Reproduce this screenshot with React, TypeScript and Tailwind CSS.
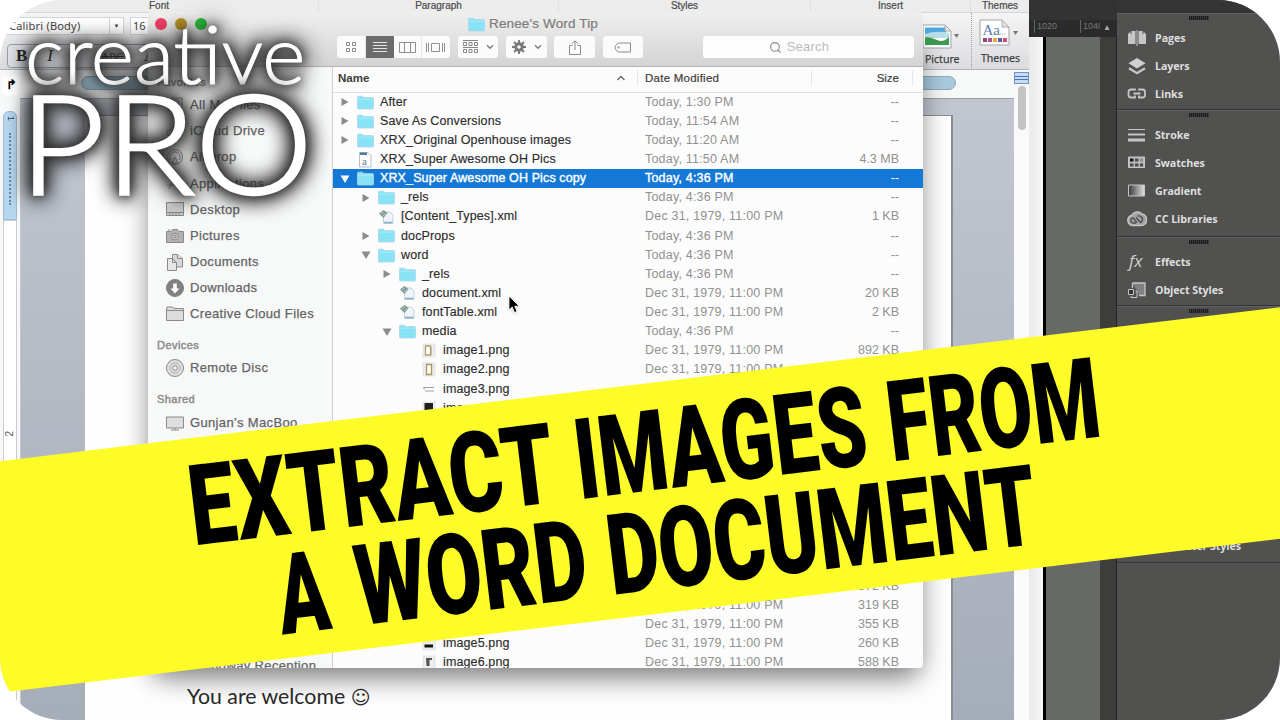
import React, { useLayoutEffect, useRef, useState } from 'react';
import { Search } from 'lucide-react';

type IconName = 'folder' | 'doc' | 'xml' | 'img1' | 'img2' | 'img3' | 'img4' | 'img5' | 'img6' | 'none';

interface FileRow {
  name: string;
  icon: IconName;
  depth: number;
  arrow?: 'right' | 'down';
  date: string;
  size: string;
  selected?: boolean;
}

const OLD = 'Dec 31, 1979, 11:00 PM';
const NOW = 'Today, 4:36 PM';

const TOP_ROWS: FileRow[] = [
  { name: 'After', icon: 'folder', depth: 0, arrow: 'right', date: 'Today, 1:30 PM', size: '--' },
  { name: 'Save As Conversions', icon: 'folder', depth: 0, arrow: 'right', date: 'Today, 11:54 AM', size: '--' },
  { name: 'XRX_Original Openhouse images', icon: 'folder', depth: 0, arrow: 'right', date: 'Today, 11:20 AM', size: '--' },
  { name: 'XRX_Super Awesome OH Pics', icon: 'doc', depth: 0, date: 'Today, 11:50 AM', size: '4.3 MB' },
  { name: 'XRX_Super Awesome OH Pics copy', icon: 'folder', depth: 0, arrow: 'down', date: NOW, size: '--', selected: true },
  { name: '_rels', icon: 'folder', depth: 1, arrow: 'right', date: NOW, size: '--' },
  { name: '[Content_Types].xml', icon: 'xml', depth: 1, date: OLD, size: '1 KB' },
  { name: 'docProps', icon: 'folder', depth: 1, arrow: 'right', date: NOW, size: '--' },
  { name: 'word', icon: 'folder', depth: 1, arrow: 'down', date: NOW, size: '--' },
  { name: '_rels', icon: 'folder', depth: 2, arrow: 'right', date: NOW, size: '--' },
  { name: 'document.xml', icon: 'xml', depth: 2, date: OLD, size: '20 KB' },
  { name: 'fontTable.xml', icon: 'xml', depth: 2, date: OLD, size: '2 KB' },
  { name: 'media', icon: 'folder', depth: 2, arrow: 'down', date: NOW, size: '--' },
  { name: 'image1.png', icon: 'img1', depth: 3, date: OLD, size: '892 KB' },
  { name: 'image2.png', icon: 'img2', depth: 3, date: OLD, size: '' },
  { name: 'image3.png', icon: 'img3', depth: 3, date: '', size: '' },
  { name: 'image4.png', icon: 'img4', depth: 3, date: '', size: '' },
];

const BOTTOM_ROWS: FileRow[] = [
  { name: '', icon: 'none', depth: 3, date: '', size: '372 KB' },
  { name: '', icon: 'none', depth: 3, date: OLD, size: '319 KB' },
  { name: '', icon: 'none', depth: 3, date: OLD, size: '355 KB' },
  { name: 'image5.png', icon: 'img5', depth: 3, date: OLD, size: '260 KB' },
  { name: 'image6.png', icon: 'img6', depth: 3, date: OLD, size: '588 KB' },
];

const INDENT = ['pl-0', 'pl-[21px]', 'pl-[42px]', 'pl-[63px]'];

// Scales a word horizontally so that its ink is exactly `width` px wide
const FitWord: React.FC<{ text: string; width: number }> = ({ text, width }) => {
  const ref = useRef<HTMLSpanElement>(null);
  const [fit, setFit] = useState({ scale: 1, shift: 0 });

  useLayoutEffect(() => {
    const ctx = document.createElement('canvas').getContext('2d');
    if (!ref.current || !ctx) return;
    const cs = getComputedStyle(ref.current);
    ctx.font = `${cs.fontWeight} ${cs.fontSize} ${cs.fontFamily}`;
    const m = ctx.measureText(text);
    const scale = width / (m.actualBoundingBoxLeft + m.actualBoundingBoxRight);
    setFit({ scale, shift: m.actualBoundingBoxLeft * scale });
  }, [text, width]);

  return (
    <span className="block shrink-0" style={{ width }}>
      <span
        ref={ref}
        className="inline-block origin-left whitespace-nowrap"
        style={{ transform: `translateX(${fit.shift}px) scaleX(${fit.scale})` }}
      >
        {text}
      </span>
    </span>
  );
};

const Folder = () => (
  <svg width="17" height="15" viewBox="0 0 17 15" className="shrink-0">
    <path d="M.5 2.200q0-1 1-1h4l1.300 1.400h8.700q1 0 1 1v9.400q0 1-1 1h-14q-1 0-1-1z" fill="#88e3f6" stroke="#b0d3e4" strokeWidth=".8" />
    <path d="M1 4.200h15" stroke="#a9edf9" />
  </svg>
);

const FileIcon: React.FC<{ icon: IconName }> = ({ icon }) => {
  switch (icon) {
    case 'folder':
      return <Folder />;
    case 'doc':
      return (
        <svg width="17" height="17" viewBox="0 0 17 17" className="shrink-0">
          <path d="M2.500 1.500h8.500l3 3v11.500h-11.500z" fill="#fafcfd" stroke="#b7c1c8" />
          <path d="M3 1.500h7v2.600h-7z" fill="#4f7d99" />
          <text x="5" y="13.500" fontSize="11" fontFamily="Liberation Serif, serif" fill="#5f86a0">a</text>
        </svg>
      );
    case 'xml':
      return (
        <svg width="17" height="16" viewBox="0 0 17 16" className="shrink-0">
          <path d="M5.500 3h6.500l3 3v8.500h-9.500z" fill="#eef4f9" stroke="#c3d0db" />
          <path d="M6 13.500h8.500" stroke="#8fb0c9" strokeWidth="1.600" />
          <path d="M1 4.500l4.500-3.500l4 3l-4 5z" fill="#7b9c91" />
          <path d="M3 4.500l3-1.500M5 7l3-2.500" stroke="#b4cfc5" />
        </svg>
      );
    case 'none':
      return <span className="w-[17px]" />;
    default:
      return (
        <svg width="17" height="15" viewBox="0 0 17 15" className="shrink-0">
          {icon !== 'img3' && <rect x="3" y="1" width="12" height="13" fill="#eeeeec" stroke="#d6d6d4" strokeWidth=".6" />}
          {icon === 'img1' && <path d="M5.500 3h5v9h-5z M11 4v8" fill="#fff" stroke="#b49f74" strokeWidth="1.300" />}
          {icon === 'img2' && <path d="M6.500 2.500h5v10h-5z" fill="#fff" stroke="#ad9660" strokeWidth="1.400" />}
          {icon === 'img3' && <path d="M4 8.500v-2h10M5 10h9" fill="none" stroke="#9da2a6" strokeWidth="1.200" />}
          {icon === 'img4' && <path d="M4.500 2h8.500v11h-8.500z" fill="#1f1f20" />}
          {icon === 'img4' && <path d="M6 9.500h6" stroke="#999" />}
          {icon === 'img5' && <path d="M4.500 8.500h8.500v3h-8.500z" fill="#111" />}
          {icon === 'img6' && <path d="M6 3h6v2h-2.500v6h-3z" fill="#555" />}
        </svg>
      );
  }
};

const ListRow: React.FC<{ row: FileRow }> = ({ row }) => (
  <div className={`flex h-[19.130px] shrink-0 items-center text-[12.500px] ${row.selected ? 'bg-[#1478d6] text-white' : 'text-[#2c2c2c]'}`}>
    <div className={`flex w-[312px] shrink-0 items-center ${INDENT[row.depth]}`}>
      <svg width="24" height="12" viewBox="0 0 24 12" className="shrink-0" fill={row.selected ? '#fff' : '#8b8b8b'}>
        {row.arrow === 'right' && <path d="M8.500 2v8l7-4z" />}
        {row.arrow === 'down' && <path d="M7.500 2.500h9l-4.500 7.500z" />}
      </svg>
      <FileIcon icon={row.icon} />
      <span className={`whitespace-nowrap pl-[6px] tracking-[0.120px] ${row.selected ? '[-webkit-text-stroke:0.400px_white]' : '[-webkit-text-stroke:0.150px_#2c2c2c]'}`}>
        {row.name}
      </span>
    </div>
    <div className={`w-[170px] whitespace-nowrap tracking-[0.200px] ${row.selected ? '[-webkit-text-stroke:0.400px_white]' : 'text-[#919191]'}`}>{row.date}</div>
    <div className={`w-[84px] whitespace-nowrap text-right ${row.selected ? '' : 'text-[#919191]'}`}>{row.size}</div>
  </div>
);

const SidebarItem: React.FC<{ label: string; children: React.ReactNode }> = ({ label, children }) => (
  <div className="flex h-[26.100px] shrink-0 items-center gap-[6px] pl-[18px]">
    <svg width="18" height="18" viewBox="0 0 18 18" className="shrink-0" fill="none" stroke="#8a8a8a" strokeWidth="1">
      {children}
    </svg>
    <span className="whitespace-nowrap text-[13px] tracking-[0.350px] text-[#646464] [-webkit-text-stroke:0.250px_#646464]">{label}</span>
  </div>
);

const SidebarLabel: React.FC<{ label: string }> = ({ label }) => (
  <div className="shrink-0 pl-[9px] text-[11px] leading-[14px] tracking-[0.450px] text-[#8b8b8b] [-webkit-text-stroke:0.450px_#8b8b8b]">{label}</div>
);

const Chevron = () => (
  <svg width="8" height="6" viewBox="0 0 8 6" fill="none" stroke="#7c7c7c" strokeWidth="1.400">
    <path d="M1 1.200l3 3l3-3" />
  </svg>
);

const FinderToolbar = () => (
  <div className="flex h-[22px] items-center">
    <div className="ml-[189px] flex h-[22px] w-[113px] overflow-hidden rounded-[3px] bg-[#fbfbfb]">
      <div className="flex w-[29px] items-center justify-center border-r border-gray-200">
        <svg width="12" height="12" viewBox="0 0 12 12" fill="none" stroke="#8b8b8b">
          <path d="M1.500 1.500h3v3h-3zM7.500 1.500h3v3h-3zM1.500 7.500h3v3h-3zM7.500 7.500h3v3h-3z" />
        </svg>
      </div>
      <div className="flex w-[28px] items-center justify-center bg-[#6c6c6c]">
        <svg width="14" height="12" viewBox="0 0 14 12" stroke="#e4e4e4">
          <path d="M0 1.500h14M0 4.500h14M0 7.500h14M0 10.500h14" />
        </svg>
      </div>
      <div className="flex w-[28px] items-center justify-center border-r border-gray-200">
        <svg width="17" height="11" viewBox="0 0 17 11" fill="none" stroke="#909090">
          <path d="M.5.5h16v10h-16zM5.500.5v10M11.500.5v10" />
        </svg>
      </div>
      <div className="flex w-[28px] items-center justify-center">
        <svg width="20" height="11" viewBox="0 0 20 11" fill="none" stroke="#909090">
          <path d="M5.500 1.500h8v8h-8zM.5 1v9M2.500 1v9M16.500 1v9M18.500 1v9" />
        </svg>
      </div>
    </div>
    <div className="ml-2 flex h-[22px] w-10 items-center justify-center gap-2 rounded-[3px] bg-[#fbfbfb]">
      <svg width="15" height="14" viewBox="0 0 15 14" fill="none" stroke="#868686">
        <path d="M0 .5h15M0 7.500h15M.5 2.500h3v3h-3zM6 2.500h3v3h-3zM11.500 2.500h3v3h-3zM.5 9.500h3v3h-3zM6 9.500h3v3h-3zM11.500 9.500h3v3h-3z" />
      </svg>
      <Chevron />
    </div>
    <div className="ml-2 flex h-[22px] w-[41px] items-center justify-center gap-2 rounded-[3px] bg-[#fbfbfb]">
      <svg width="14" height="14" viewBox="0 0 14 14" fill="none" stroke="#777">
        <circle cx="7" cy="7" r="3.300" strokeWidth="3" />
        <path d="M7 0v3M7 11v3M0 7h3M11 7h3M2 2l2.200 2.200M9.800 9.800l2.200 2.200M2 12l2.200-2.200M9.800 4.200l2.200-2.200" strokeWidth="1.900" />
      </svg>
      <Chevron />
    </div>
    <div className="ml-[7px] flex h-[22px] w-[41px] items-center justify-center rounded-[3px] bg-[#fbfbfb]">
      <svg width="12" height="15" viewBox="0 0 12 15" fill="none" stroke="#8b8b8b">
        <path d="M3.500 5.500h-3v9h11v-9h-3M6 10v-9M3 3.800l3-3l3 3" />
      </svg>
    </div>
    <div className="ml-2 flex h-[22px] w-10 items-center justify-center rounded-[3px] bg-[#fbfbfb]">
      <svg width="18" height="11" viewBox="0 0 18 11" fill="none" stroke="#8b8b8b">
        <path d="M5 1h11.500v9h-11.500q-1.500 0-3.500-2.800q-1-1.700 0-3.400q2-2.800 3.500-2.800z" />
        <circle cx="4.500" cy="5.500" r=".7" />
      </svg>
    </div>
    <div className="ml-[60px] flex h-[22px] w-[211px] items-center justify-center gap-[5px] rounded-[3px] bg-[#fdfdfd] pr-[19px] text-[13px] tracking-[0.250px] text-[#bcbcbc]">
      <Search size={13} color="#858585" strokeWidth={2} />
      Search
    </div>
  </div>
);

const FinderSidebar = () => (
  <div className="flex w-[185px] shrink-0 flex-col overflow-hidden border-r border-[#cfcfcf] bg-[#f7f8f8] pt-2">
    <SidebarLabel label="Favorites" />
    <div className="h-[3px] shrink-0" />
    <SidebarItem label="All My Files">
      <path d="M2 4h11v10h-11zM5 2h11v10" />
    </SidebarItem>
    <SidebarItem label="iCloud Drive">
      <path d="M4 14q-3 0-3-3t3-3q1-4 5-4q3 0 4 3q4 0 4 3.500t-3 3.500z" />
    </SidebarItem>
    <SidebarItem label="AirDrop">
      <circle cx="9" cy="9" r="7.500" />
      <path d="M5 12a5 5 0 1 1 8 0M9 9l3 6h-6z" />
    </SidebarItem>
    <SidebarItem label="Applications">
      <path d="M3 15l6-12l6 12M1 11h16" />
    </SidebarItem>
    <SidebarItem label="Desktop">
      <path d="M.5 2.500h17v13h-17z" fill="#d0d0d0" />
      <path d="M.5 12.500h17M4 13v2M7 13v2M10 13v2M13 13v2" />
    </SidebarItem>
    <SidebarItem label="Pictures">
      <path d="M.5 4.500h4.500l1.500-2h5l1.500 2h4.500v11h-17zM2 3h2" fill="#b2b2b2" />
      <circle cx="9" cy="9.500" r="3.500" fill="#c8c8c8" />
      <circle cx="9" cy="9.500" r="1.300" />
    </SidebarItem>
    <SidebarItem label="Documents">
      <path d="M6.500 1.500h5l5 4v8.500h-10z" fill="#d8d8d8" />
      <path d="M1.500 5.500h5l4 4v8h-9zM6.500 5.500v4h4M11.500 1.500v4h5" fill="#e6e6e6" />
    </SidebarItem>
    <SidebarItem label="Downloads">
      <circle cx="9" cy="9" r="8.500" fill="#808080" stroke="#808080" />
      <path d="M9 14.500l-4.500-5h2.700v-5h3.600v5h2.700z" fill="#fff" stroke="none" />
    </SidebarItem>
    <SidebarItem label="Creative Cloud Files">
      <path d="M1 3.500v-1.500h6l1 1.500h9.500v12h-17v-12zM.5 5.500h17" fill="#dcdcdc" />
    </SidebarItem>
    <div className="h-[11px] shrink-0" />
    <SidebarLabel label="Devices" />
    <div className="h-[3px] shrink-0" />
    <SidebarItem label="Remote Disc">
      <circle cx="9" cy="9" r="8.500" fill="#ddd" />
      <circle cx="9" cy="9" r="5" stroke="#b0b0b0" />
      <circle cx="9" cy="9" r="2.300" fill="#f5f5f5" />
    </SidebarItem>
    <div className="h-[11px] shrink-0" />
    <SidebarLabel label="Shared" />
    <div className="h-1 shrink-0" />
    <SidebarItem label="Gunjan’s MacBoo…">
      <path d="M.5 3h17v11h-17z" fill="#dedede" />
      <path d="M5 16h8M9 14v2" />
    </SidebarItem>
    <div className="mt-[217px] shrink-0">
      <SidebarItem label="Broadway Reception">
        <path d="M.5 3h17v11h-17z" fill="#dedede" />
      </SidebarItem>
    </div>
  </div>
);

const FinderWindow = () => (
  <div className="absolute left-[148px] top-3 flex h-[656px] w-[775px] flex-col overflow-hidden rounded-[4px] bg-[#fcfcfc]">
    <div className="h-[55px] shrink-0 border-b border-[#b3b3b3] bg-linear-to-b from-[#efefee] to-[#d4d4d4]">
      <div className="flex h-6 items-center">
        <div className="flex w-[320px] gap-2 pl-[7px]">
          <span className="size-3 rounded-full bg-[#ee4068]" />
          <span className="size-3 rounded-full bg-[#b99325]" />
          <span className="size-3 rounded-full bg-[#27bf3c]" />
        </div>
        <Folder />
        <span className="pl-1 text-[13.500px] tracking-[0.150px] text-[#7c7c7c] [-webkit-text-stroke:0.200px_#7c7c7c]">Renee's Word Tip</span>
      </div>
      <FinderToolbar />
    </div>
    <div className="flex min-h-0 flex-1">
      <FinderSidebar />
      <div className="flex min-w-0 flex-1 flex-col">
        <div className="flex h-[25.500px] shrink-0 items-center border-b border-[#dedede] pb-[2px] text-[12px] text-[#3c3c3c] [-webkit-text-stroke:0.200px_#3c3c3c]">
          <span className="w-[284px] pl-[5px] text-[11.500px] font-bold [-webkit-text-stroke:0]">Name</span>
          <svg width="8" height="6" viewBox="0 0 8 6" fill="none" stroke="#666" strokeWidth="1.300">
            <path d="M.5 5l3.500-3.500l3.500 3.500" />
          </svg>
          <span className="ml-[12px] flex h-[16px] w-[175px] items-center border-x border-[#e6e6e6] pl-[7px] text-[11.500px] tracking-[0.250px]">Date Modified</span>
          <span className="w-[87px] text-right text-[11.500px]">Size</span>
          <span className="ml-[13px] h-[16px] border-l border-[#e6e6e6]" />
        </div>
        {TOP_ROWS.map((row, i) => <ListRow key={i} row={row} />)}
        <div className="h-[159px] shrink-0" />
        {BOTTOM_ROWS.map((row, i) => <ListRow key={i} row={row} />)}
      </div>
    </div>
  </div>
);

const RibbonHeader = () => (
  <div className="flex h-3 items-center bg-[#ececec] text-[10px] leading-none text-[#4a4a4a] [-webkit-text-stroke:0.200px_#4a4a4a]">
    <span className="w-[318px] text-center">Font</span>
    <span className="w-[240px] border-l border-dotted border-gray-300 text-center">Paragraph</span>
    <span className="w-[252px] border-l border-dotted border-gray-300 text-center">Styles</span>
    <span className="w-[160px] border-l border-dotted border-gray-300 text-center">Insert</span>
    <span className="flex-1 border-l border-dotted border-gray-300 text-center">Themes</span>
  </div>
);

const Ribbon = () => (
  <div className="flex h-[58px] justify-between border-t border-b border-t-gray-300 border-b-[#b5b6bb] bg-linear-to-b from-[#f5f5f5] to-[#dcdce0] font-['Noto_Sans','Open_Sans',sans-serif]">
    <div className="flex flex-col gap-[9px] pl-[3px] pt-1">
      <div className="flex gap-[6px] text-[11px] text-[#444]">
        <div className="flex h-[18px] w-[121px] items-center justify-between border border-gray-300 bg-white pl-[5px] tracking-[0.200px]">
          Calibri (Body)
          <span className="flex h-full w-[14px] items-center justify-center border-l border-gray-300 text-[6px]">▼</span>
        </div>
        <div className="flex h-[18px] w-[50px] items-center border border-gray-300 bg-white pl-[2px]">16</div>
      </div>
      <div className="ml-1 flex h-6 w-[150px] items-center gap-5 rounded border border-gray-400 bg-gray-200 pl-2 font-['Liberation_Serif',serif] text-[17px] text-[#222]">
        <b>B</b>
        <i>I</i>
        <span className="w-5" />
        <s className="text-[11px]">ABC</s>
        <span>A</span>
      </div>
    </div>
    <div className="flex text-[10.500px] leading-none text-[#444] [-webkit-text-stroke:0.250px_#444]">
      <div className="flex w-[51px] flex-col border-r border-dotted border-gray-400 pt-[10px]">
        <svg width="40" height="27" viewBox="0 0 38 27">
          <path d="M1 2h22l6 6v17h-28z" fill="#fdfdfd" stroke="#9fa4a8" />
          <path d="M3 4.500h21v8h-21z" fill="#4fa8e0" />
          <path d="M3 11q12-4 24-1v5h-24z" fill="#b8e0e6" />
          <path d="M3 14q6 0 12 3t12-3v8h-24z" fill="#3f9a52" />
          <path d="M23 2v6h6z" fill="#e5e8ea" stroke="#aaa" />
          <path d="M32 11h5l-2.500 4z" fill="#777" />
        </svg>
        <span className="pl-1 pt-[4px]">Picture</span>
      </div>
      <div className="flex w-[57px] flex-col pt-[6px]">
        <svg width="40" height="28" viewBox="0 0 40 28" className="ml-[7px]">
          <path d="M1 1h22l7 7v18h-29z" fill="#fdfdfd" stroke="#9fa4a8" />
          <text x="3.500" y="15.500" fontSize="15" fontFamily="Liberation Serif, serif" fill="#5a7fae">Aa</text>
          <path d="M21 15h5" stroke="#aaa" strokeDasharray="1 1" />
          <path d="M23 1v7h7z" fill="#e5e8ea" stroke="#aaa" />
          <rect x="4" y="19" width="4" height="4" fill="#8d4a6b" />
          <rect x="9" y="19" width="4" height="4" fill="#b04fa0" />
          <rect x="14" y="19" width="4" height="4" fill="#e0b23a" />
          <rect x="19" y="19" width="4" height="4" fill="#6a55a8" />
          <rect x="24" y="19" width="4" height="4" fill="#c94f7c" />
          <path d="M34 12h5l-2.500 4z" fill="#777" />
        </svg>
        <span className="pl-[9px] pt-[6px]">Themes</span>
      </div>
    </div>
  </div>
);

const WordWindow = () => (
  <div className="flex w-[1029px] shrink-0 flex-col bg-[#f7f8f8]">
    <RibbonHeader />
    <Ribbon />
    <div className="flex h-[28px] items-start justify-between">
      <span className="ml-[3px] mt-[5px] flex h-[20px] w-4 items-center justify-center rounded bg-white text-[13px] font-bold text-black">↱</span>
      <div className="ml-[62px] mt-[6px] h-[14px] flex-1 rounded-full border border-[#8ea8c4] bg-[#a9cade]" />
      <div className="ml-[58px] mt-[2px] flex h-[12px] w-[15px] flex-col justify-evenly border border-[#6f93ce] bg-[#c9dcf5]">
        <span className="h-px bg-[#4a72b8]" />
        <span className="h-px bg-[#4a72b8]" />
      </div>
    </div>
    <div className="flex min-h-0 flex-1">
      <div className="w-[21px] border-r border-[#c5c8cc] pl-[3px] pt-[13px]">
        <div className="flex h-[109px] w-[14px] flex-col items-center rounded-t-md border border-[#9dbbd6] bg-[#b6d7ee] pt-1 text-[9px] leading-none text-[#345]">
          <span className="[writing-mode:vertical-rl]">1</span>
          <span className="mt-3 border-l-2 border-dotted border-[#6b8aa5] py-9" />
        </div>
        <div className="flex h-[500px] w-[14px] justify-center border border-[#c9cdd2] bg-white pt-[200px] text-[10px] leading-none text-[#555]">
          <span className="h-4 [writing-mode:sideways-lr]">2</span>
        </div>
      </div>
      <div className="flex w-[993px] justify-between border-t border-[#9b9ea5] bg-linear-to-b from-[#c1c6d0] to-[#a5adb8] pl-[64px] pr-[61px] pt-4">
        <div className="flex flex-1 flex-col border-r-2 border-t border-[#8a8d94] bg-[#fefefe]">
          <span className="mt-[566px] pl-[102px] font-['Lato',sans-serif] text-[21.300px] leading-[28px] text-[#2a2a2a]">
            You are welcome <span className="font-['DejaVu_Sans',sans-serif] text-[19px]">☺</span>
          </span>
        </div>
      </div>
      <div className="flex-1 bg-[#fafafa] pl-1">
        <div className="-mt-[12px] h-[44px] w-2 rounded-full bg-[#c3c3c3]" />
      </div>
    </div>
  </div>
);

const DocumentEdge = () => (
  <div className="flex w-[88px] shrink-0 flex-col bg-[#3d3e3c]">
    <div className="h-5 bg-[#333]" />
    <div className="flex h-[17px] items-start bg-[#2b2b2b] text-[9px] leading-[13px] text-[#777]">
      <span className="ml-[5px] w-[46px] border-l border-[#666] pl-[2px]">1020</span>
      <span className="w-[20px] overflow-hidden border-l border-[#666] pl-[2px]">1040</span>
      <span className="pl-[3px] pt-px text-[8px] text-[#aaa]">▲</span>
    </div>
    <div className="flex flex-1">
      <div className="w-[14px] bg-linear-to-r from-[#e9ebe9] to-[#f6f7f6]" />
      <div className="w-[3px] bg-black" />
      <div className="w-[54px] bg-[#676967]" />
      <div className="flex-1 border-r border-[#232323] bg-[#3d3e3c]" />
    </div>
  </div>
);

const PanelItem: React.FC<{ label: string; children: React.ReactNode }> = ({ label, children }) => (
  <div className="flex h-[28.200px] items-center gap-2 pl-[10px]">
    <svg width="20" height="18" viewBox="0 0 20 18" className="shrink-0" fill="none" stroke="#c6c6c6">
      {children}
    </svg>
    <span className="whitespace-nowrap text-[10.700px] font-bold tracking-[-0.080px] text-[#dedede]">{label}</span>
  </div>
);

const PanelGroup: React.FC<{ className: string; children?: React.ReactNode }> = ({ className, children }) => (
  <div className={`flex flex-col border-t border-[#333] shadow-[inset_0_1px_0_#626262] ${className}`}>
    <div className="flex h-[10.600px] shrink-0 items-center justify-center">
      <span className="h-1 w-5 bg-[repeating-linear-gradient(90deg,#1c1c1c_0_1px,#3a3a3a_1px_2px)]" />
    </div>
    {children}
  </div>
);

const PanelDock = () => (
  <div className="flex flex-1 flex-col bg-[#515150] font-['Open_Sans','Noto_Sans',sans-serif]">
    <div className="h-3 bg-[#353535]" />
    <PanelGroup className="h-[97px]">
      <PanelItem label="Pages">
        <path d="M1 5l2.500-2.500v2.500h1v-3h4v13h-7.500zM11.500 2h4v3h1v-2.500l2.500 2.500v10h-7.500z" fill="#c6c6c6" stroke="none" />
        <path d="M10 1v16" />
      </PanelItem>
      <PanelItem label="Layers">
        <path d="M10 1l8.500 5.200l-8.500 5.200l-8.500-5.200z" fill="#d0d0d0" stroke="none" />
        <path d="M2 11.200l8 5l8-5" strokeWidth="2.400" />
      </PanelItem>
      <PanelItem label="Links">
        <path d="M8 5.500v-1h-4q-2.500 0-2.500 2.500v3q0 2.500 2.500 2.500h4v-2M12 5.500v-1h3.500q2.500 0 2.500 2.500v3q0 2.500-2.500 2.500h-3.500v-2M6.500 8.500h7" strokeWidth="1.800" />
      </PanelItem>
    </PanelGroup>
    <PanelGroup className="h-[127px]">
      <PanelItem label="Stroke">
        <path d="M1 3.500h17" />
        <path d="M1 8.500h17" strokeWidth="2" />
        <path d="M1 14h17" strokeWidth="3" />
      </PanelItem>
      <PanelItem label="Swatches">
        <path d="M1.500 3h16v10.500h-16z" fill="#bbb" />
        <path d="M3 4.500h3.500v3h-3.500z" fill="#111" stroke="none" />
        <path d="M8 4.500h3.500v3h-3.500zM3 9.500h3.500v3h-3.500zM8 9.500h3.500v3h-3.500zM13 9.500h3v3h-3z" fill="#4a4a4a" stroke="none" />
        <path d="M13 4.500h3v3h-3z" fill="#8d8d8d" stroke="none" />
      </PanelItem>
      <PanelItem label="Gradient">
        <defs>
          <linearGradient id="ramp">
            <stop offset="0" stopColor="#3a3a3a" />
            <stop offset="1" stopColor="#e0e0e0" />
          </linearGradient>
        </defs>
        <path d="M1.500 3h16v11h-16z" fill="url(#ramp)" />
      </PanelItem>
      <PanelItem label="CC Libraries">
        <path d="M6 15.500a5.200 5.200 0 0 1-1-10.300a6.200 6.200 0 0 1 10-1.200a5.800 5.800 0 0 1-1 11.500z" fill="#a2a2a2" strokeWidth="1.500" />
        <path d="M10 12.500l-4-4.500a2.500 2.500 0 1 0 .5 5h2.500M9 7.500l4.500 5a3.200 3.200 0 1 0-3-6.300" stroke="#4e4e4e" strokeWidth="1.400" />
      </PanelItem>
    </PanelGroup>
    <PanelGroup className="h-[69px]">
      <PanelItem label="Effects">
        <text x="2" y="14" fontSize="17" fontStyle="italic" fontFamily="Open Sans, sans-serif" fill="#d0d0d0" stroke="none">fx</text>
      </PanelItem>
      <PanelItem label="Object Styles">
        <path d="M5.500 2h12.500v12.500h-6M5.500 2v5" fill="#808080" strokeWidth="1.300" />
        <path d="M1.500 8.500h5v5h-5z" fill="#333" />
        <path d="M8.500 10.500h1.500v6h-6v-1.500" />
      </PanelItem>
    </PanelGroup>
    <PanelGroup className="h-[257px] justify-between">
      <PanelItem label="Paragraph Styles">
        <path d="M10 8l3-5l3 5z" fill="#c6c6c6" stroke="none" />
      </PanelItem>
      <div className="mb-[2px]">
        <PanelItem label="Character Styles">
          <path d="M5 15l5-12l5 12M7 10h6" />
        </PanelItem>
      </div>
    </PanelGroup>
    <div className="flex-1 border-t border-[#383838]" />
  </div>
);

const Logo = () => (
  <div className="absolute left-[29px] top-0 font-['Lato',sans-serif] text-white [text-shadow:0_0_8px_#2a2a2a,0_0_12px_#2a2a2a,0_0_16px_#2a2a2a,0_0_20px_#2a2a2a,0_0_24px_#2a2a2a,0_0_24px_#2a2a2a]">
    <div className="mt-[3px] text-[81px] font-light leading-[100px] [-webkit-text-stroke:1px_white]">
      <FitWord text="creative" width={273} />
    </div>
    <div className="ml-[5px] mt-[-22px] text-[138px] font-light leading-[120px] [-webkit-text-stroke:2.500px_white]">
      <FitWord text="PRO" width={271} />
    </div>
  </div>
);

const Banner = () => (
  <div className="absolute left-[-60px] top-[385px] flex h-[230px] w-[1400px] -rotate-[6.860deg] flex-col bg-[#fdfc28] pl-[256px] pt-[19px] font-['Roboto',sans-serif] text-[112.500px] font-black leading-[99px] text-black">
    <div className="flex gap-[28px]">
      <FitWord text="EXTRACT" width={361} />
      <FitWord text="IMAGES" width={286} />
      <FitWord text="FROM" width={205} />
    </div>
    <div className="flex gap-[28px] pl-[72px]">
      <FitWord text="A" width={52} />
      <FitWord text="WORD" width={229} />
      <FitWord text="DOCUMENT" width={426} />
    </div>
  </div>
);

export default function App() {
  return (
    <div className="h-[720px] w-[1280px] overflow-hidden bg-white">
      <div className="relative flex h-full overflow-hidden rounded-[62px] font-['Liberation_Sans',sans-serif]">
        <WordWindow />
        <DocumentEdge />
        <PanelDock />
        {/* soft shadow under the Finder window */}
        <div className="absolute left-[158px] top-[40px] h-[616px] w-[755px] rounded-lg shadow-[0_14px_26px_8px_rgba(0,0,0,0.500)]" />
        <FinderWindow />
        <svg width="14" height="20" viewBox="0 0 14 20" className="absolute left-[508px] top-[295px] drop-shadow">
          <path d="M1 1v14l3.200-3l2.300 5.500l2.500-1l-2.300-5.300h4.500z" fill="#000" stroke="#fff" strokeWidth=".8" />
        </svg>
        <Banner />
        <Logo />
      </div>
    </div>
  );
}
